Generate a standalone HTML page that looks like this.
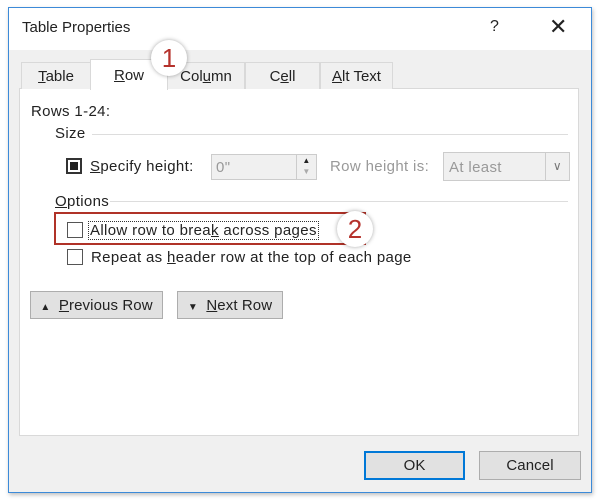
<!DOCTYPE html>
<html><head><style>
*{box-sizing:border-box;margin:0;padding:0}
body{width:600px;height:501px;background:#fff;font-family:"Liberation Sans",sans-serif;font-size:15px;letter-spacing:.35px;color:#222;position:relative;overflow:hidden}
.abs{position:absolute}
.win{left:8px;top:7px;width:584px;height:486px;border:1px solid #3c8ad8;background:#f0f0f0;box-shadow:1px 2px 4px rgba(0,0,0,.25)}
.title{left:9px;top:8px;width:582px;height:42px;background:#fff}
.tab{top:62px;height:27px;border:1px solid #d9d9d9;border-bottom:none;background:#f0f0f0;text-align:center;line-height:28px;font-size:15px;letter-spacing:0}
.panel{left:19px;top:88px;width:560px;height:348px;background:#fff;border:1px solid #d9d9d9}
u{text-decoration:underline}
.line{height:1px;background:#ddd}
.cb{width:16px;height:16px;border:1px solid #333;background:#fff}
.btn{background:#e1e1e1;border:1px solid #adadad;text-align:center;font-size:15px;letter-spacing:.1px}
.circ{width:36px;height:36px;border-radius:50%;background:#fff;box-shadow:0 0 4px rgba(0,0,0,.35);color:#b5322c;font-size:26px;text-align:center;line-height:36px;letter-spacing:0}
</style></head><body>
<div class="abs win"></div>
<div class="abs title"></div>
<div class="abs" style="left:22px;top:19px;font-size:15px;letter-spacing:0">Table Properties</div>
<div class="abs" style="left:490px;top:18px;font-size:16px">?</div>
<div class="abs" style="left:549px;top:14px;font-size:22px;font-weight:300">✕</div>
<div class="abs panel"></div>
<div class="abs tab" style="left:21px;width:70px"><u>T</u>able</div>
<div class="abs tab" style="left:167px;width:78px">Col<u>u</u>mn</div>
<div class="abs tab" style="left:245px;width:75px">C<u>e</u>ll</div>
<div class="abs tab" style="left:320px;width:73px"><u>A</u>lt Text</div>
<div class="abs tab" style="left:90px;top:59px;height:31px;width:78px;background:#fff;line-height:31px"><u>R</u>ow</div>
<div class="abs circ" style="left:151px;top:40px">1</div>
<div class="abs" style="left:31px;top:103px">Rows 1-24:</div>
<div class="abs" style="left:55px;top:125px">Size</div>
<div class="abs line" style="left:92px;top:134px;width:476px"></div>
<div class="abs cb" style="left:66px;top:158px;border-width:2px"><div style="margin:2px;width:8px;height:8px;background:#222"></div></div>
<div class="abs" style="left:90px;top:158px"><u>S</u>pecify height:</div>
<div class="abs" style="left:211px;top:154px;width:106px;height:26px;border:1px solid #ccc;background:#f0f0f0;color:#999;padding:4px 4px">0"</div>
<div class="abs" style="left:296px;top:155px;width:20px;height:24px;background:#f0f0f0;border-left:1px solid #ccc;font-size:8px;text-align:center;line-height:11px">▲<br><span style="color:#aaa">▼</span></div>
<div class="abs" style="left:330px;top:158px;color:#999">Row height is:</div>
<div class="abs" style="left:443px;top:152px;width:127px;height:29px;border:1px solid #ccc;background:#f0f0f0;color:#999;padding:6px 5px">At least</div>
<div class="abs" style="left:545px;top:153px;width:24px;height:27px;border-left:1px solid #ccc;text-align:center;line-height:26px;color:#777;font-size:12px">∨</div>
<div class="abs" style="left:55px;top:193px"><u>O</u>ptions</div>
<div class="abs line" style="left:110px;top:201px;width:458px"></div>
<div class="abs" style="left:54px;top:212px;width:312px;height:33px;border:2px solid #b03228"></div>
<div class="abs cb" style="left:67px;top:222px;border-color:#555"></div>
<div class="abs" style="left:88px;top:221px;border:1px dotted #333;padding:0 1px">Allow row to brea<u>k</u> across pages</div>
<div class="abs circ" style="left:337px;top:211px">2</div>
<div class="abs cb" style="left:67px;top:249px;border-color:#555"></div>
<div class="abs" style="left:91px;top:249px">Repeat as <u>h</u>eader row at the top of each page</div>
<div class="abs btn" style="left:30px;top:291px;width:133px;height:28px;line-height:27px"><span style="font-size:10px">▲</span>&nbsp; <u>P</u>revious Row</div>
<div class="abs btn" style="left:177px;top:291px;width:106px;height:28px;line-height:27px"><span style="font-size:10px">▼</span>&nbsp; <u>N</u>ext Row</div>
<div class="abs btn" style="left:364px;top:451px;width:101px;height:29px;line-height:26px;border:2px solid #0078d7">OK</div>
<div class="abs btn" style="left:479px;top:451px;width:102px;height:29px;line-height:27px">Cancel</div>
</body></html>
